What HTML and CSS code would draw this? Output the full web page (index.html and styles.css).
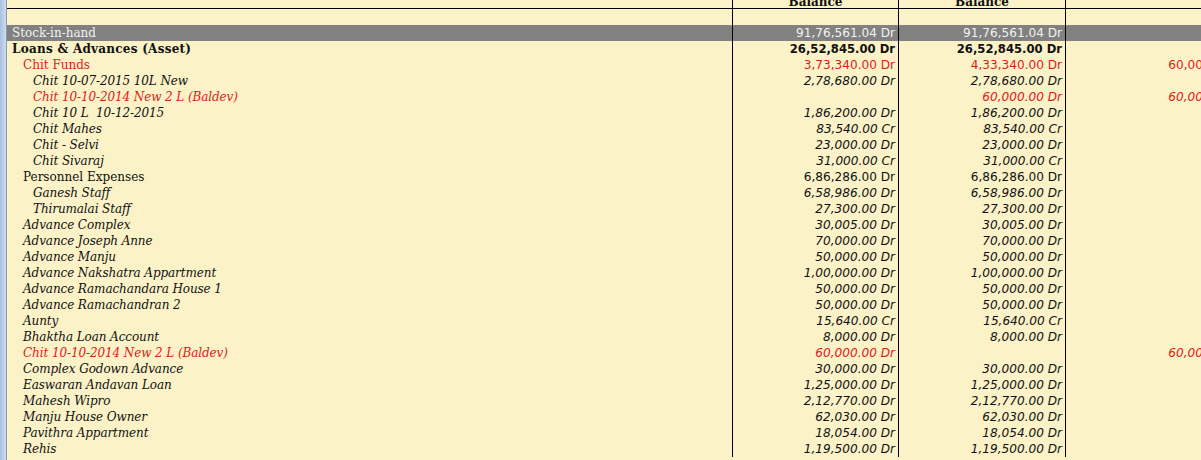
FILE: index.html
```html
<!DOCTYPE html>
<html>
<head>
<meta charset="utf-8">
<link rel="stylesheet" href="styles.css">
</head>
<body>
<div class="screen">
  <div class="strip"></div>
  <div class="sheet">
    <div class="row head">
      <div class="cell label"></div>
      <div class="cell num hc"><span>Balance</span></div>
      <div class="cell num hc"><span>Balance</span></div>
      <div class="cell num hc"></div>
    </div>
    <div class="row blank">
      <div class="cell label"></div><div class="cell num"></div><div class="cell num"></div><div class="cell num"></div>
    </div>
    <div class="row sel">
      <div class="cell label l0">Stock-in-hand</div>
      <div class="cell num">91,76,561.04 Dr</div>
      <div class="cell num">91,76,561.04 Dr</div>
      <div class="cell num"></div>
    </div>
    <div class="row grp">
      <div class="cell label l0">Loans &amp; Advances (Asset)</div>
      <div class="cell num">26,52,845.00 Dr</div>
      <div class="cell num">26,52,845.00 Dr</div>
      <div class="cell num"></div>
    </div>
    <div class="row sub red">
      <div class="cell label l1">Chit Funds</div>
      <div class="cell num">3,73,340.00 Dr</div>
      <div class="cell num">4,33,340.00 Dr</div>
      <div class="cell num">60,000.00 Dr</div>
    </div>
    <div class="row led">
      <div class="cell label l2">Chit 10-07-2015 10L New</div>
      <div class="cell num">2,78,680.00 Dr</div>
      <div class="cell num">2,78,680.00 Dr</div>
      <div class="cell num"></div>
    </div>
    <div class="row led red">
      <div class="cell label l2">Chit 10-10-2014 New 2 L (Baldev)</div>
      <div class="cell num"></div>
      <div class="cell num">60,000.00 Dr</div>
      <div class="cell num">60,000.00 Dr</div>
    </div>
    <div class="row led">
      <div class="cell label l2">Chit 10 L&nbsp; 10-12-2015</div>
      <div class="cell num">1,86,200.00 Dr</div>
      <div class="cell num">1,86,200.00 Dr</div>
      <div class="cell num"></div>
    </div>
    <div class="row led">
      <div class="cell label l2">Chit Mahes</div>
      <div class="cell num">83,540.00 Cr</div>
      <div class="cell num">83,540.00 Cr</div>
      <div class="cell num"></div>
    </div>
    <div class="row led">
      <div class="cell label l2">Chit - Selvi</div>
      <div class="cell num">23,000.00 Dr</div>
      <div class="cell num">23,000.00 Dr</div>
      <div class="cell num"></div>
    </div>
    <div class="row led">
      <div class="cell label l2">Chit Sivaraj</div>
      <div class="cell num">31,000.00 Cr</div>
      <div class="cell num">31,000.00 Cr</div>
      <div class="cell num"></div>
    </div>
    <div class="row sub">
      <div class="cell label l1">Personnel Expenses</div>
      <div class="cell num">6,86,286.00 Dr</div>
      <div class="cell num">6,86,286.00 Dr</div>
      <div class="cell num"></div>
    </div>
    <div class="row led">
      <div class="cell label l2">Ganesh Staff</div>
      <div class="cell num">6,58,986.00 Dr</div>
      <div class="cell num">6,58,986.00 Dr</div>
      <div class="cell num"></div>
    </div>
    <div class="row led">
      <div class="cell label l2">Thirumalai Staff</div>
      <div class="cell num">27,300.00 Dr</div>
      <div class="cell num">27,300.00 Dr</div>
      <div class="cell num"></div>
    </div>
    <div class="row led">
      <div class="cell label l1">Advance Complex</div>
      <div class="cell num">30,005.00 Dr</div>
      <div class="cell num">30,005.00 Dr</div>
      <div class="cell num"></div>
    </div>
    <div class="row led">
      <div class="cell label l1">Advance Joseph Anne</div>
      <div class="cell num">70,000.00 Dr</div>
      <div class="cell num">70,000.00 Dr</div>
      <div class="cell num"></div>
    </div>
    <div class="row led">
      <div class="cell label l1">Advance Manju</div>
      <div class="cell num">50,000.00 Dr</div>
      <div class="cell num">50,000.00 Dr</div>
      <div class="cell num"></div>
    </div>
    <div class="row led">
      <div class="cell label l1">Advance Nakshatra Appartment</div>
      <div class="cell num">1,00,000.00 Dr</div>
      <div class="cell num">1,00,000.00 Dr</div>
      <div class="cell num"></div>
    </div>
    <div class="row led">
      <div class="cell label l1">Advance Ramachandara House 1</div>
      <div class="cell num">50,000.00 Dr</div>
      <div class="cell num">50,000.00 Dr</div>
      <div class="cell num"></div>
    </div>
    <div class="row led">
      <div class="cell label l1">Advance Ramachandran 2</div>
      <div class="cell num">50,000.00 Dr</div>
      <div class="cell num">50,000.00 Dr</div>
      <div class="cell num"></div>
    </div>
    <div class="row led">
      <div class="cell label l1">Aunty</div>
      <div class="cell num">15,640.00 Cr</div>
      <div class="cell num">15,640.00 Cr</div>
      <div class="cell num"></div>
    </div>
    <div class="row led">
      <div class="cell label l1">Bhaktha Loan Account</div>
      <div class="cell num">8,000.00 Dr</div>
      <div class="cell num">8,000.00 Dr</div>
      <div class="cell num"></div>
    </div>
    <div class="row led red">
      <div class="cell label l1">Chit 10-10-2014 New 2 L (Baldev)</div>
      <div class="cell num">60,000.00 Dr</div>
      <div class="cell num"></div>
      <div class="cell num">60,000.00 Dr</div>
    </div>
    <div class="row led">
      <div class="cell label l1">Complex Godown Advance</div>
      <div class="cell num">30,000.00 Dr</div>
      <div class="cell num">30,000.00 Dr</div>
      <div class="cell num"></div>
    </div>
    <div class="row led">
      <div class="cell label l1">Easwaran Andavan Loan</div>
      <div class="cell num">1,25,000.00 Dr</div>
      <div class="cell num">1,25,000.00 Dr</div>
      <div class="cell num"></div>
    </div>
    <div class="row led">
      <div class="cell label l1">Mahesh Wipro</div>
      <div class="cell num">2,12,770.00 Dr</div>
      <div class="cell num">2,12,770.00 Dr</div>
      <div class="cell num"></div>
    </div>
    <div class="row led">
      <div class="cell label l1">Manju House Owner</div>
      <div class="cell num">62,030.00 Dr</div>
      <div class="cell num">62,030.00 Dr</div>
      <div class="cell num"></div>
    </div>
    <div class="row led">
      <div class="cell label l1">Pavithra Appartment</div>
      <div class="cell num">18,054.00 Dr</div>
      <div class="cell num">18,054.00 Dr</div>
      <div class="cell num"></div>
    </div>
    <div class="row led">
      <div class="cell label l1">Rehis</div>
      <div class="cell num">1,19,500.00 Dr</div>
      <div class="cell num">1,19,500.00 Dr</div>
      <div class="cell num"></div>
    </div>
  </div>
</div>
</body>
</html>
```

FILE: styles.css
```css
html, body {
  margin: 0;
  padding: 0;
  overflow: hidden;
  width: 1201px;
  height: 460px;
  background: #fbf2c8;
}

.screen {
  display: flex;
  height: 460px;
}

.strip {
  flex: 0 0 6px;
  background: linear-gradient(to right, #a9c0e2, #cfdcf0);
  border-right: 1px solid #8e9aab;
}

.sheet {
  flex: 0 0 auto;
  display: flex;
  flex-direction: column;
}

.row {
  display: grid;
  grid-template-columns: 725px 166px 167px 186px;
  height: 16px;
  color: #111;
}

.cell {
  height: 16px;
  line-height: 16px;
  white-space: nowrap;
  overflow: hidden;
}

.label {
  font-family: "DejaVu Serif", serif;
  font-size: 12px;
}

.num {
  border-left: 1px solid #000;
  text-align: right;
  padding-right: 3px;
  font-family: "DejaVu Sans", sans-serif;
  font-size: 12.1px;
}

.l0 { padding-left: 5px; }
.l1 { padding-left: 16px; }
.l2 { padding-left: 26px; }

.head {
  height: 8px;
  border-bottom: 1px solid #000;
}

.head .cell {
  height: 8px;
}

.hc {
  display: flex;
  justify-content: center;
  align-items: flex-end;
  padding-right: 0;
}

.hc span {
  font-family: "DejaVu Serif", serif;
  font-weight: bold;
  font-size: 12px;
  line-height: 14px;
  margin-bottom: -1px;
}

.sel {
  background: #818181;
  color: #f2f2f2;
}

.grp {
  font-weight: bold;
}

.grp .label {
  letter-spacing: 0.25px;
}

.grp .num {
  font-size: 11.6px;
}

.led {
  font-style: italic;
}

.led .label {
  letter-spacing: -0.1px;
}

.red {
  color: #e01a1a;
}
```
